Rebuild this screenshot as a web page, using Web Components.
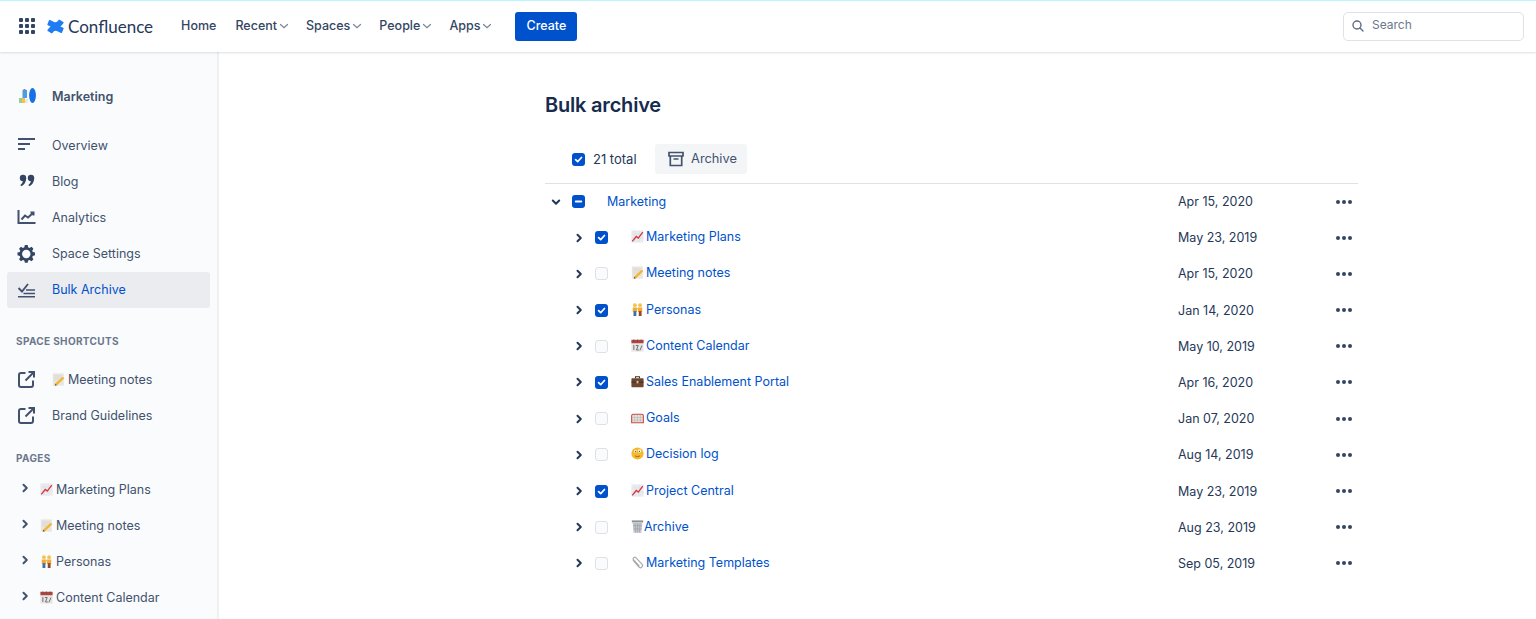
<!DOCTYPE html>
<html lang="en"><head><meta charset="utf-8"><title>Bulk archive</title>
<style>
html,body{margin:0;height:619px;overflow:hidden;background:#fff;font-family:Inter,"Noto Sans",sans-serif;color:#172B4D;-webkit-font-smoothing:antialiased}
app-shell{height:619px}
</style></head><body>
<app-shell>
  <top-bar slot="top"></top-bar>
  <side-bar slot="side"></side-bar>
  <bulk-page slot="main"></bulk-page>
</app-shell>
<script>
const EMOJI={
chart:`<rect x=".5" y=".5" width="15" height="15" fill="#e9ebee"/><path d="M.5 5h15M.5 10h15M5 .5v15M10 .5v15" stroke="#d5d9de" stroke-width=".5"/><path d="M1.500 14 6.500 8l2.500 2L14.500 2.500" fill="none" stroke="#d8343f" stroke-width="1.600"/>`,
memo:`<rect x="1" y=".5" width="13.500" height="15" fill="#e8e6df"/><path d="M2.500 3.500h10M2.500 6h10M2.500 8.500h6" stroke="#cfcdc6" stroke-width=".7"/><path d="M4 13 13 4.500l2.200 2L6.300 15z" fill="#f2b632"/><path d="M4 13 3.300 15.800 6.300 15z" fill="#7a5a2a"/>`,
people:`<circle cx="4.800" cy="2.700" r="2.300" fill="#f6c244"/><circle cx="11.200" cy="2.700" r="2.300" fill="#f6c244"/><path d="M2.200 5.500h5.200v5.500h-1v5H3.300v-5H2.200z" fill="#f2a83a"/><path d="M8.600 5.500h5.200v5.500h-1v5H9.700v-5H8.600z" fill="#f2a83a"/><rect x="3.200" y="10" width="3.300" height="6" fill="#3b6fb5"/><rect x="9.600" y="10" width="3.300" height="6" fill="#8a4b32"/><path d="M6.600 6h2.800v1.800H6.600z" fill="#f6c244"/>`,
cal:`<rect x=".5" y="1" width="15" height="14.500" fill="#e6e6e6"/><rect x=".5" y="1" width="15" height="4.200" fill="#b5433d"/><path d="M3.500 .5v3M8 .5v3M12.500 .5v3" stroke="#555" stroke-width=".8"/><path d="M3.500 7.500v6M6 8h2.800L6.800 13.500h2.800M13.500 8l-2.500 6" stroke="#555" stroke-width="1" fill="none"/>`,
case:`<path d="M5.500 4V2.200h5V4" fill="none" stroke="#4a3325" stroke-width="1.300"/><rect x=".5" y="4" width="15" height="11" rx="1" fill="#6b4630"/><rect x=".5" y="8.300" width="15" height="1" fill="#3f2a1c"/><rect x="6.800" y="7.200" width="2.400" height="3" fill="#d8c49a"/>`,
goal:`<path d="M.8 14.500V5.800Q.8 4 2.800 4h10.400q2 0 2 1.800v8.700z" fill="#e5e1dc" stroke="#c9463f" stroke-width="1.300"/><path d="M4.500 4.500v10M8 4.500v10M11.500 4.500v10M1 8h14M1 11.200h14" stroke="#a9a39b" stroke-width=".5"/>`,
face:`<circle cx="8" cy="8" r="7.500" fill="#f5b82e"/><circle cx="5.500" cy="5.500" r="1.800" fill="#fbf1d6"/><circle cx="10.500" cy="5" r="2.200" fill="#fbf1d6"/><circle cx="5.700" cy="5.700" r=".8" fill="#5a4220"/><circle cx="10.300" cy="5.300" r=".8" fill="#5a4220"/><path d="M5 11q3 1.800 6 0" fill="none" stroke="#8a5a1d" stroke-width="1"/>`,
trash:`<rect x="1" y=".5" width="14" height="2.500" fill="#8c9196"/><path d="M2 3h12L12.800 15.800H3.200z" fill="#c3c7cb"/><path d="M5 4l.6 11.500M8 4v11.500M11 4l-.6 11.500M2.500 7h11M3 11h10" stroke="#8f9499" stroke-width=".6"/>`,
clip:`<path d="M2.800 5.500 9.500 13.500a2.600 2.600 0 0 0 3.900-3.500L6 2a2 2 0 0 0-3 2.600l7 7.600" fill="none" stroke="#a4a9ae" stroke-width="1.400" stroke-linecap="round"/>`
};
const def=(n,f)=>customElements.define(n,class extends HTMLElement{
  connectedCallback(){if(this.shadowRoot)return;this.attachShadow({mode:'open'}).innerHTML=f(this)}
});
const a=(e,k,d='')=>e.hasAttribute(k)?e.getAttribute(k):d;

def('app-shell',()=>`<style>:host{display:grid;grid-template-columns:219px 1fr;grid-template-rows:52px 1fr;overflow:hidden}
.t{grid-column:1/3;position:relative;z-index:2;display:block}</style>
<div class="t"><slot name="top"></slot></div><slot name="side"></slot><slot name="main"></slot>`);

def('emoji-icon',e=>{const s=a(e,'size','13');return `<style>:host{display:inline-flex;width:${s}px;height:${s}px;flex:none}svg{width:100%;height:100%;display:block}</style>
<svg viewBox="0 0 16 16">${EMOJI[a(e,'name')]}</svg>`});

def('chev-icon',e=>{const d=a(e,'dir','right'),col=a(e,'color','#253858');
 return `<style>:host{display:inline-flex;flex:none;width:12px;height:12px}svg{width:100%;height:100%}</style>
 <svg viewBox="0 0 12 12"><path d="${d=='right'?'M4.500 2.800 7.800 6 4.500 9.200':'M2.800 4.500 6 7.800 9.200 4.500'}" fill="none" stroke="${col}" stroke-width="2" stroke-linecap="round" stroke-linejoin="round"/></svg>`});

def('check-box',e=>{const st=a(e,'state','off');
 const on=st!='off';
 return `<style>:host{display:inline-flex;flex:none;width:13px;height:13px;box-sizing:border-box;border-radius:3px;align-items:center;justify-content:center;
 background:${on?'#0052CC':'#FAFBFC'};border:${on?'0':'1.500px solid #DFE1E6'}}svg{width:11px;height:11px}</style>
 ${st=='on'?'<svg viewBox="0 0 11 11"><path d="M2.600 5.600 4.700 7.600 8.500 3.500" fill="none" stroke="#fff" stroke-width="1.700" stroke-linecap="round" stroke-linejoin="round"/></svg>':''}
 ${st=='mixed'?'<svg viewBox="0 0 11 11"><path d="M2.700 5.500h5.600" fill="none" stroke="#fff" stroke-width="1.800" stroke-linecap="round"/></svg>':''}`});

def('nav-link',e=>`<style>:host{display:flex;align-items:center;gap:2px;font-size:12.500px;font-weight:500;color:#344563;white-space:nowrap}
svg{width:10px;height:10px;margin-top:2px}</style><slot></slot>
${e.hasAttribute('menu')?'<svg viewBox="0 0 10 10"><path d="M1.500 3.500 5 6.800 8.500 3.500" fill="none" stroke="#7A869A" stroke-width="1.200" stroke-linecap="round"/></svg>':''}`);

def('top-bar',()=>`<style>
:host{display:flex;align-items:center;box-sizing:border-box;height:52px;background:#fff;border-top:1px solid #b9f5fb;box-shadow:0 1px 2px rgba(9,30,66,.14);padding:0 12px 1px 19px}
.grid{width:16px;height:16px;display:grid;grid-template-columns:repeat(3,4px);grid-template-rows:repeat(3,4px);gap:2px}
.grid i{background:#344563;border-radius:1px}
.logo{display:flex;align-items:center;gap:4px;margin-left:12px;font-family:Lato,Inter,sans-serif;font-size:17px;color:#253858}
.logo svg{width:17px;height:17px}
nav{display:flex;margin:0 0 2px 28px;gap:17px;align-items:center}
nav-link:first-child{margin-right:2px}
.create{margin-left:23px;width:62px;height:29px;box-sizing:border-box;padding-bottom:1px;background:#0052CC;color:#fff;border-radius:3px;display:flex;align-items:center;justify-content:center;font-size:12.500px;font-weight:500}
.search{margin-left:auto;width:181px;height:29px;box-sizing:border-box;border:1.500px solid #DFE1E6;border-radius:5px;display:flex;align-items:center;gap:7px;padding:0 0 3px 7px;color:#6B778C;font-size:12px;background:#fff}
.search svg{width:14px;height:14px;margin-top:3px}
</style>
<div class="grid">${'<i></i>'.repeat(9)}</div>
<div class="logo"><svg viewBox="0 0 24 24"><g fill="#1f7cf2" stroke="#1f7cf2" stroke-linejoin="round" stroke-width="2"><path d="M1.500 17.500C6 10.500 11 9.500 15.500 11.500L22.500 14.800 20.200 20.300 14.500 17.500C11 16 9 17 6.800 20.800Z"/><path d="M22.500 6.500C18 13.500 13 14.500 8.500 12.500L1.500 9.200 3.800 3.700 9.500 6.500C13 8 15 7 17.200 3.200Z"/></g></svg><span>Confluence</span></div>
<nav><nav-link>Home</nav-link><nav-link menu>Recent</nav-link><nav-link menu>Spaces</nav-link><nav-link menu>People</nav-link><nav-link menu>Apps</nav-link></nav>
<div class="create">Create</div>
<div class="search"><svg viewBox="0 0 14 14"><circle cx="6" cy="6" r="4" fill="none" stroke="#5E6C84" stroke-width="1.400"/><path d="M9 9l3 3" stroke="#5E6C84" stroke-width="1.400" stroke-linecap="round"/></svg><span>Search</span></div>`);

const SIDE={
overview:'<path d="M1 3h17M1 8h12M1 13h7" stroke="#42526E" stroke-width="2" fill="none"/>',
blog:'<circle cx="6" cy="6" r="3.200" fill="#344563"/><path d="M9.200 6c0 4-2 7-5 8.200L3.300 13c1.800-1.200 2.700-3 2.700-5z" fill="#344563"/><circle cx="14" cy="6" r="3.200" fill="#344563"/><path d="M17.200 6c0 4-2 7-5 8.200L11.300 13c1.800-1.200 2.700-3 2.700-5z" fill="#344563"/>',
analytics:'<path d="M1.500 2v13h17" fill="none" stroke="#42526E" stroke-width="2"/><path d="M4.500 11.500l3.500-4 3 2 5-4.500M13.500 4.500h3v3" fill="none" stroke="#42526E" stroke-width="2"/>',
gear:'<path d="M8 .500h3l.6 2.500 1.500.7 2.200-1.300 2 2.100-1.300 2.200.6 1.500 2.400.6v3l-2.400.6-.6 1.500 1.300 2.200-2 2-2.200-1.300-1.500.7-.6 2.400H8l-.6-2.400-1.500-.7-2.200 1.300-2-2 1.300-2.200-.6-1.500L0 11.800v-3l2.400-.6.600-1.500-1.300-2.200 2-2.100 2.200 1.300 1.500-.7z" transform="translate(.5 -.5) scale(.92)" fill="#344563"/><circle cx="9.300" cy="9" r="4.200" fill="#FAFBFC"/>',
bulk:'<path d="M1.500 7l3.500 3.500L11 3" fill="none" stroke="#42526E" stroke-width="1.900"/><path d="M9 9h9M6.500 12.500H18M1 15.800h17" stroke="#42526E" stroke-width="1.500" fill="none"/>',
out:'<path d="M8.500 3H4a2 2 0 0 0-2 2v10a2 2 0 0 0 2 2h10a2 2 0 0 0 2-2v-4.500" fill="none" stroke="#42526E" stroke-width="2"/><path d="M8.500 10.500 16.500 2.500M11.500 2h5.500v5.500" fill="none" stroke="#42526E" stroke-width="2"/>'
};
def('side-item',e=>{const act=e.hasAttribute('active');return `<style>
:host{display:flex;align-items:center;height:36.200px;border-radius:3px;padding-left:10px;font-size:12.500px;color:${act?'#0052CC':'#42526E'};background:${act?'#EBECF0':'transparent'}}
svg{width:20px;height:18px;flex:none;margin-right:15px}
</style><svg viewBox="0 0 20 18">${SIDE[a(e,'icon')]}</svg><slot></slot>`});

def('page-link',e=>`<style>:host{display:flex;align-items:center;height:36px;padding-left:12px;font-size:12.500px;color:#42526E}
chev-icon{margin-right:8.500px;margin-top:-2px}emoji-icon{margin-right:3.500px}</style>
<chev-icon color="#42526E"></chev-icon><emoji-icon name="${a(e,'emoji')}" size="13"></emoji-icon><slot></slot>`);

def('side-bar',()=>`<style>
:host{display:block;box-sizing:border-box;background:#FAFBFC;border-right:2px solid #EEF0F3;padding:26px 7px 0 7px;overflow:hidden;height:567px}
.space{display:flex;align-items:center;height:36px;padding-left:10px;font-size:12.500px;font-weight:600;color:#42526E;margin-bottom:13px}
.space svg{width:20px;height:16px;margin-right:15px;flex:none}
h3{margin:25px 0 12px 9px;font-size:10px;line-height:16px;font-weight:700;letter-spacing:.35px;color:#6B778C}
h3.p{margin-top:17px;margin-bottom:5px}
emoji-icon{margin-right:3px}
</style>
<div class="space"><svg viewBox="0 0 20 16"><rect x="5.500" y="2" width="4.500" height="8" fill="#4d9be0"/><rect x="6.500" y="1" width="2" height="2" fill="#7a8aa0"/><rect x="2" y="10" width="3" height="5" fill="#9ccf8a"/><rect x="5" y="10" width="3" height="5" fill="#f2c14e"/><rect x="8" y="11" width="3" height="4" fill="#e8e8e6"/><ellipse cx="15.500" cy="7.500" rx="3.400" ry="7.500" fill="#1670e8"/></svg>Marketing</div>
<side-item icon="overview">Overview</side-item>
<side-item icon="blog">Blog</side-item>
<side-item icon="analytics">Analytics</side-item>
<side-item icon="gear">Space Settings</side-item>
<side-item icon="bulk" active>Bulk Archive</side-item>
<h3>SPACE SHORTCUTS</h3>
<side-item icon="out"><emoji-icon name="memo" size="13"></emoji-icon>Meeting notes</side-item>
<side-item icon="out">Brand Guidelines</side-item>
<h3 class="p">PAGES</h3>
<page-link emoji="chart">Marketing Plans</page-link>
<page-link emoji="memo">Meeting notes</page-link>
<page-link emoji="people">Personas</page-link>
<page-link emoji="cal">Content Calendar</page-link>`);

def('tree-row',e=>{const lvl=+a(e,'level','1'),em=a(e,'emoji');return `<style>
:host{display:grid;grid-template-columns:633px 158px 17px;height:36.200px;align-items:center;font-size:12.500px}
.l{display:flex;align-items:center;padding-left:${lvl?28:5}px}
chev-icon{margin-right:10px}
check-box{margin-right:${lvl?22.500:22}px}
.title{display:flex;align-items:center;color:#0052CC;padding-bottom:${lvl?2:0}px}
emoji-icon{margin-right:${em=='trash'?.5:2.500}px}
.date{color:#253858}
.dots{display:flex;gap:2px}.dots i{width:4px;height:4px;border-radius:50%;background:#344563}
</style><div class="l"><chev-icon dir="${lvl?'right':'down'}"></chev-icon><check-box state="${a(e,'state','off')}"></check-box>
<span class="title">${em?`<emoji-icon name="${em}"></emoji-icon>`:''}<slot></slot></span></div>
<span class="date">${a(e,'date')}</span><span class="dots"><i></i><i></i><i></i></span>`});

const ROWS=[['chart','on','May 23, 2019','Marketing Plans'],['memo','off','Apr 15, 2020','Meeting notes'],['people','on','Jan 14, 2020','Personas'],['cal','off','May 10, 2019','Content Calendar'],['case','on','Apr 16, 2020','Sales Enablement Portal'],['goal','off','Jan 07, 2020','Goals'],['face','off','Aug 14, 2019','Decision log'],['chart','on','May 23, 2019','Project Central'],['trash','off','Aug 23, 2019','Archive'],['clip','off','Sep 05, 2019','Marketing Templates']];

def('bulk-page',()=>`<style>
:host{display:block;padding:37px 0 0 326px;background:#fff}
.w{width:813px}
h1{margin:0 0 23px;font-size:20px;line-height:32px;font-weight:600;color:#172B4D;letter-spacing:-.2px}
.bar{display:flex;align-items:center;height:30px;padding:0 0 9px 27px;border-bottom:1px solid #DFE1E6;font-size:13px;color:#253858}
.bar span{margin-left:8px;padding-bottom:1px}
.btn{margin-left:18px;width:92px;height:30px;box-sizing:border-box;padding:0 0 1px 13px;background:#F4F5F7;border-radius:3px;display:flex;align-items:center;gap:7.500px;font-size:12.800px;font-weight:400;color:#42526E}
.btn svg{width:16px;height:16px}
.rows{margin-top:-.6px}
</style><div class="w"><h1>Bulk archive</h1>
<div class="bar"><check-box state="on"></check-box><span>21 total</span>
<div class="btn"><svg viewBox="0 0 16 16"><path d="M1 1.500h14v3.500H1zM2.300 5v9.500h11.400V5M5.500 8h5" fill="none" stroke="#42526E" stroke-width="1.700"/></svg>Archive</div></div>
<div class="rows"><tree-row level="0" state="mixed" date="Apr 15, 2020">Marketing</tree-row>
${ROWS.map(r=>`<tree-row emoji="${r[0]}" state="${r[1]}" date="${r[2]}">${r[3]}</tree-row>`).join('')}</div>
</div>`);
</script>
</body></html>
